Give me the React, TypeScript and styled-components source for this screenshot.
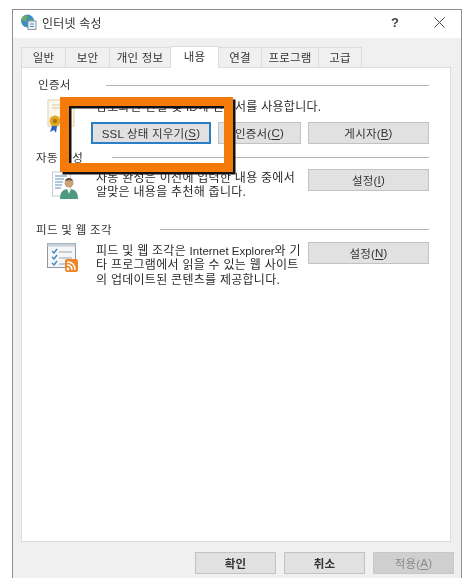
import React, { FC } from "react";
import styled, { createGlobalStyle } from "styled-components";

const GlobalStyle = createGlobalStyle`
  html, body {
    margin: 0;
    height: 578px;
    overflow: hidden;
    background: #fff;
    font-family: "Liberation Sans", "Noto Sans CJK KR", sans-serif;
    font-size: 12px;
    color: #222;
  }
`;

const Page = styled.div`
  height: 578px;
  padding: 9px 12px 0 12px;
  box-sizing: border-box;
  overflow: hidden;
  position: relative;
  filter: blur(0.3px);
`;

const Dialog = styled.div`
  width: 450px;
  height: 569px;
  box-sizing: border-box;
  background: #f0f0f0;
  border: 1px solid #8f8f8f;
  border-bottom: none;
  display: flex;
  flex-direction: column;
`;

const TitleBar = styled.div`
  height: 28px;
  flex: none;
  background: #fff;
  display: flex;
  align-items: center;
  padding: 0 14px 4px 7px;
  box-sizing: border-box;
  gap: 5px;
`;

const WindowTitle = styled.div`
  flex: 1;
  font-size: 12px;
  letter-spacing: 0.2px;
  color: #333;
`;

const HelpMark = styled.div`
  width: 16px;
  margin-right: 26px;
  font-size: 13px;
  font-weight: 700;
  text-align: center;
  color: #444;
`;

const CloseMark = styled.svg`
  width: 11px;
  height: 11px;
  margin-right: 2px;
`;

const TabStrip = styled.div`
  height: 22px;
  margin: 7px 0 0 9px;
  display: flex;
  align-items: flex-end;
  flex: none;
`;

const Tab = styled.div<{ $w: number; $active?: boolean }>`
  width: ${(p) => p.$w}px;
  height: ${(p) => (p.$active ? 22 : 20)}px;
  box-sizing: border-box;
  display: flex;
  align-items: center;
  justify-content: center;
  font-size: 11.5px;
  letter-spacing: 0.2px;
  color: #333;
  background: ${(p) => (p.$active ? "#fff" : "#f0f0f0")};
  border: 1px solid #dcdcdc;
  border-bottom: none;
  margin-left: -1px;
  margin-bottom: ${(p) => (p.$active ? -1 : 0)}px;
  position: relative;
  z-index: ${(p) => (p.$active ? 1 : 0)};
  padding-bottom: ${(p) => (p.$active ? 4 : 2)}px;
`;

const TabPanel = styled.div`
  width: 430px;
  height: 475px;
  margin-left: 8px;
  box-sizing: border-box;
  background: #fff;
  border: 1px solid #dcdcdc;
  padding: 7px 21px 0 14px;
  flex: none;
`;

const Group = styled.section<{ $gap: number }>`
  margin-bottom: ${(p) => p.$gap}px;
`;

const GroupHeading = styled.div<{ $indent: number; $lineGap: number }>`
  display: flex;
  align-items: center;
  gap: ${(p) => p.$lineGap}px;
  height: 18px;
  margin-left: ${(p) => p.$indent}px;
  font-size: 11.5px;
  letter-spacing: 0.3px;
  color: #333;
  &::after {
    content: "";
    flex: 1;
    height: 1px;
    margin-top: 2px;
    background: #b5b5b5;
  }
`;

const GroupBody = styled.div`
  display: grid;
  grid-template-columns: 60px 1fr;
`;

const GroupIcon = styled.div<{ $left: number; $top: number }>`
  padding: ${(p) => p.$top}px 0 0 ${(p) => p.$left}px;
`;

const RowText = styled.div<{ $top: number; $width?: number }>`
  margin: ${(p) => p.$top}px 0 0;
  width: ${(p) => (p.$width ? `${p.$width}px` : "auto")};
  line-height: 14.7px;
  letter-spacing: 0.27px;
  color: #2b2b2b;
  white-space: pre;
`;

const TextLine = styled.div`
  height: 14.7px;
`;

const Latin = styled.span`
  font-size: 11.5px;
  letter-spacing: 0;
`;

const SplitRow = styled.div<{ $top: number }>`
  display: flex;
  justify-content: space-between;
  align-items: flex-start;
  margin-top: ${(p) => p.$top}px;
`;

const ButtonRow = styled.div`
  display: flex;
  gap: 7px;
  margin: 7px 0 0 -5px;
`;

const Button = styled.div<{ $w: number; $focused?: boolean; $disabled?: boolean; $strong?: boolean }>`
  width: ${(p) => p.$w}px;
  height: 22px;
  flex: none;
  box-sizing: border-box;
  display: flex;
  align-items: center;
  justify-content: center;
  font-size: 11.5px;
  background: ${(p) => (p.$disabled ? "#cfcfcf" : "#e1e1e1")};
  border: ${(p) => (p.$focused ? "2px solid #2a7fc4" : `1px solid ${p.$disabled ? "#c8c8c8" : "#c2c2c2"}`)};
  color: ${(p) => (p.$disabled ? "#8a8a8a" : "#333")};
  letter-spacing: 0.2px;
  font-weight: ${(p) => (p.$strong ? 600 : 400)};
  u {
    text-underline-offset: 2px;
  }
`;

const Footer = styled.div`
  display: flex;
  justify-content: flex-end;
  gap: 8px;
  padding: 10px 7px 0 0;
`;

const Callout = styled.div`
  position: absolute;
  left: 60px;
  top: 97px;
  width: 173px;
  height: 75px;
  box-sizing: border-box;
  border: 9px solid #f47a0a;
  box-shadow: 2.5px 2.5px 0 #111, inset 2.5px 2.5px 0 #111;
`;

const GlobeIcon: FC = () => (
  <svg width="17" height="16" viewBox="0 0 17 16">
    <circle cx="7.5" cy="7" r="6.5" fill="#3c8fc4" />
    <path d="M3 3c2-2 4-2 5-1 0 2-2 2-2 4S3 7 2 6zM9 6c2-1 4 0 5 1 0 3-2 5-3 5-1-2-3-3-2-6z" fill="#6fae4a" />
    <rect x="8" y="7" width="8" height="8.5" fill="#eef2f6" stroke="#8a97a3" />
    <path d="M10 10h4M10 12.5h4" stroke="#4c8fc0" />
  </svg>
);

const CertIcon: FC = () => (
  <svg width="30" height="36" viewBox="0 0 30 36">
    <rect x="2" y="1" width="26" height="26" fill="#fbf7ec" stroke="#e2cfa6" />
    <path d="M6 6h14M6 9h10" stroke="#d8c6a0" />
    <circle cx="9" cy="22" r="5.5" fill="#e3a81f" />
    <circle cx="9" cy="22" r="2.2" fill="#a8740e" />
    <path d="M6 27l-2 6 4-2 2 3 1-7z" fill="#2f62c4" />
  </svg>
);

const AutoIcon: FC = () => (
  <svg width="28" height="30" viewBox="0 0 28 30">
    <rect x="0.5" y="1" width="18" height="24" fill="#fff" stroke="#c4ccd4" />
    <path d="M3 5h12M3 8h9M3 11h8M3 14h7M3 17h6" stroke="#5f8fbc" />
    <circle cx="17" cy="12" r="4.5" fill="#c9a27e" />
    <path d="M13 10c1-4 7-4 8 0-2-1-6-1-8 0z" fill="#5a4636" />
    <path d="M8 28c0-8 4-10 9-10s9 2 9 10z" fill="#4d9a7e" />
    <path d="M15 18l2 5 2-5z" fill="#eef4f0" />
  </svg>
);

const FeedIcon: FC = () => (
  <svg width="32" height="30" viewBox="0 0 32 30">
    <rect x="0.5" y="0.5" width="28" height="24" fill="#f4f6f8" stroke="#8d98a3" />
    <rect x="0.5" y="0.5" width="28" height="3" fill="#c6ced6" />
    <path d="M5 8l2 2 3-4M5 14l2 2 3-4M5 20l2 2 3-4" stroke="#3f86c6" strokeWidth="1.4" fill="none" />
    <path d="M12 9h13M12 15h13M12 21h8" stroke="#9aa4ae" />
    <rect x="18" y="16" width="13" height="13" rx="2" fill="#f0862a" />
    <circle cx="21" cy="26" r="1.4" fill="#fff" />
    <path d="M20 22c3 0 5 2 5 5M20 19c5 0 8 3 8 8" stroke="#fff" strokeWidth="1.5" fill="none" />
  </svg>
);

const App: FC = () => {
  return (
    <Page>
      <GlobalStyle />
      <Dialog>
        <TitleBar>
          <GlobeIcon />
          <WindowTitle>인터넷 속성</WindowTitle>
          <HelpMark>?</HelpMark>
          <CloseMark viewBox="0 0 11 11">
            <path d="M0.5 0.5l10 10M10.5 0.5l-10 10" stroke="#444" strokeWidth="1" />
          </CloseMark>
        </TitleBar>
        <TabStrip>
          <Tab $w={45}>일반</Tab>
          <Tab $w={45}>보안</Tab>
          <Tab $w={62}>개인 정보</Tab>
          <Tab $w={49} $active>내용</Tab>
          <Tab $w={44}>연결</Tab>
          <Tab $w={58}>프로그램</Tab>
          <Tab $w={44}>고급</Tab>
        </TabStrip>
        <TabPanel>
          <Group $gap={4}>
            <GroupHeading $indent={2} $lineGap={35}>인증서</GroupHeading>
            <GroupBody>
              <GroupIcon $left={10} $top={6}>
                <CertIcon />
              </GroupIcon>
              <div>
                <RowText $top={7}>
                  <TextLine>암호화된 연결 및 <Latin>ID</Latin>에 인증서를 사용합니다.</TextLine>
                </RowText>
                <ButtonRow>
                  <Button $w={120} $focused>SSL 상태 지우기(<u>S</u>)</Button>
                  <Button $w={83}>인증서(<u>C</u>)</Button>
                  <Button $w={121}>게시자(<u>B</u>)</Button>
                </ButtonRow>
              </div>
            </GroupBody>
          </Group>
          <Group $gap={16}>
            <GroupHeading $indent={0} $lineGap={29}>자동 완성</GroupHeading>
            <GroupBody>
              <GroupIcon $left={16} $top={5}>
                <AutoIcon />
              </GroupIcon>
              <SplitRow $top={3}>
                <RowText $top={2} $width={205}>
                  <TextLine>자동 완성은 이전에 입력한 내용 중에서</TextLine>
                  <TextLine>알맞은 내용을 추천해 줍니다.</TextLine>
                </RowText>
                <Button $w={121}>설정(<u>I</u>)</Button>
              </SplitRow>
            </GroupBody>
          </Group>
          <Group $gap={0}>
            <GroupHeading $indent={0} $lineGap={48}>피드 및 웹 조각</GroupHeading>
            <GroupBody>
              <GroupIcon $left={11} $top={5}>
                <FeedIcon />
              </GroupIcon>
              <SplitRow $top={4}>
                <RowText $top={2} $width={205}>
                  <TextLine>피드 및 웹 조각은 <Latin>Internet Explorer</Latin>와 기</TextLine>
                  <TextLine>타 프로그램에서 읽을 수 있는 웹 사이트</TextLine>
                  <TextLine>의 업데이트된 콘텐츠를 제공합니다.</TextLine>
                </RowText>
                <Button $w={121}>설정(<u>N</u>)</Button>
              </SplitRow>
            </GroupBody>
          </Group>
        </TabPanel>
        <Footer>
          <Button $w={81} $strong>확인</Button>
          <Button $w={81} $strong>취소</Button>
          <Button $w={81} $disabled>적용(<u>A</u>)</Button>
        </Footer>
      </Dialog>
      <Callout />
    </Page>
  );
};

export default App;
